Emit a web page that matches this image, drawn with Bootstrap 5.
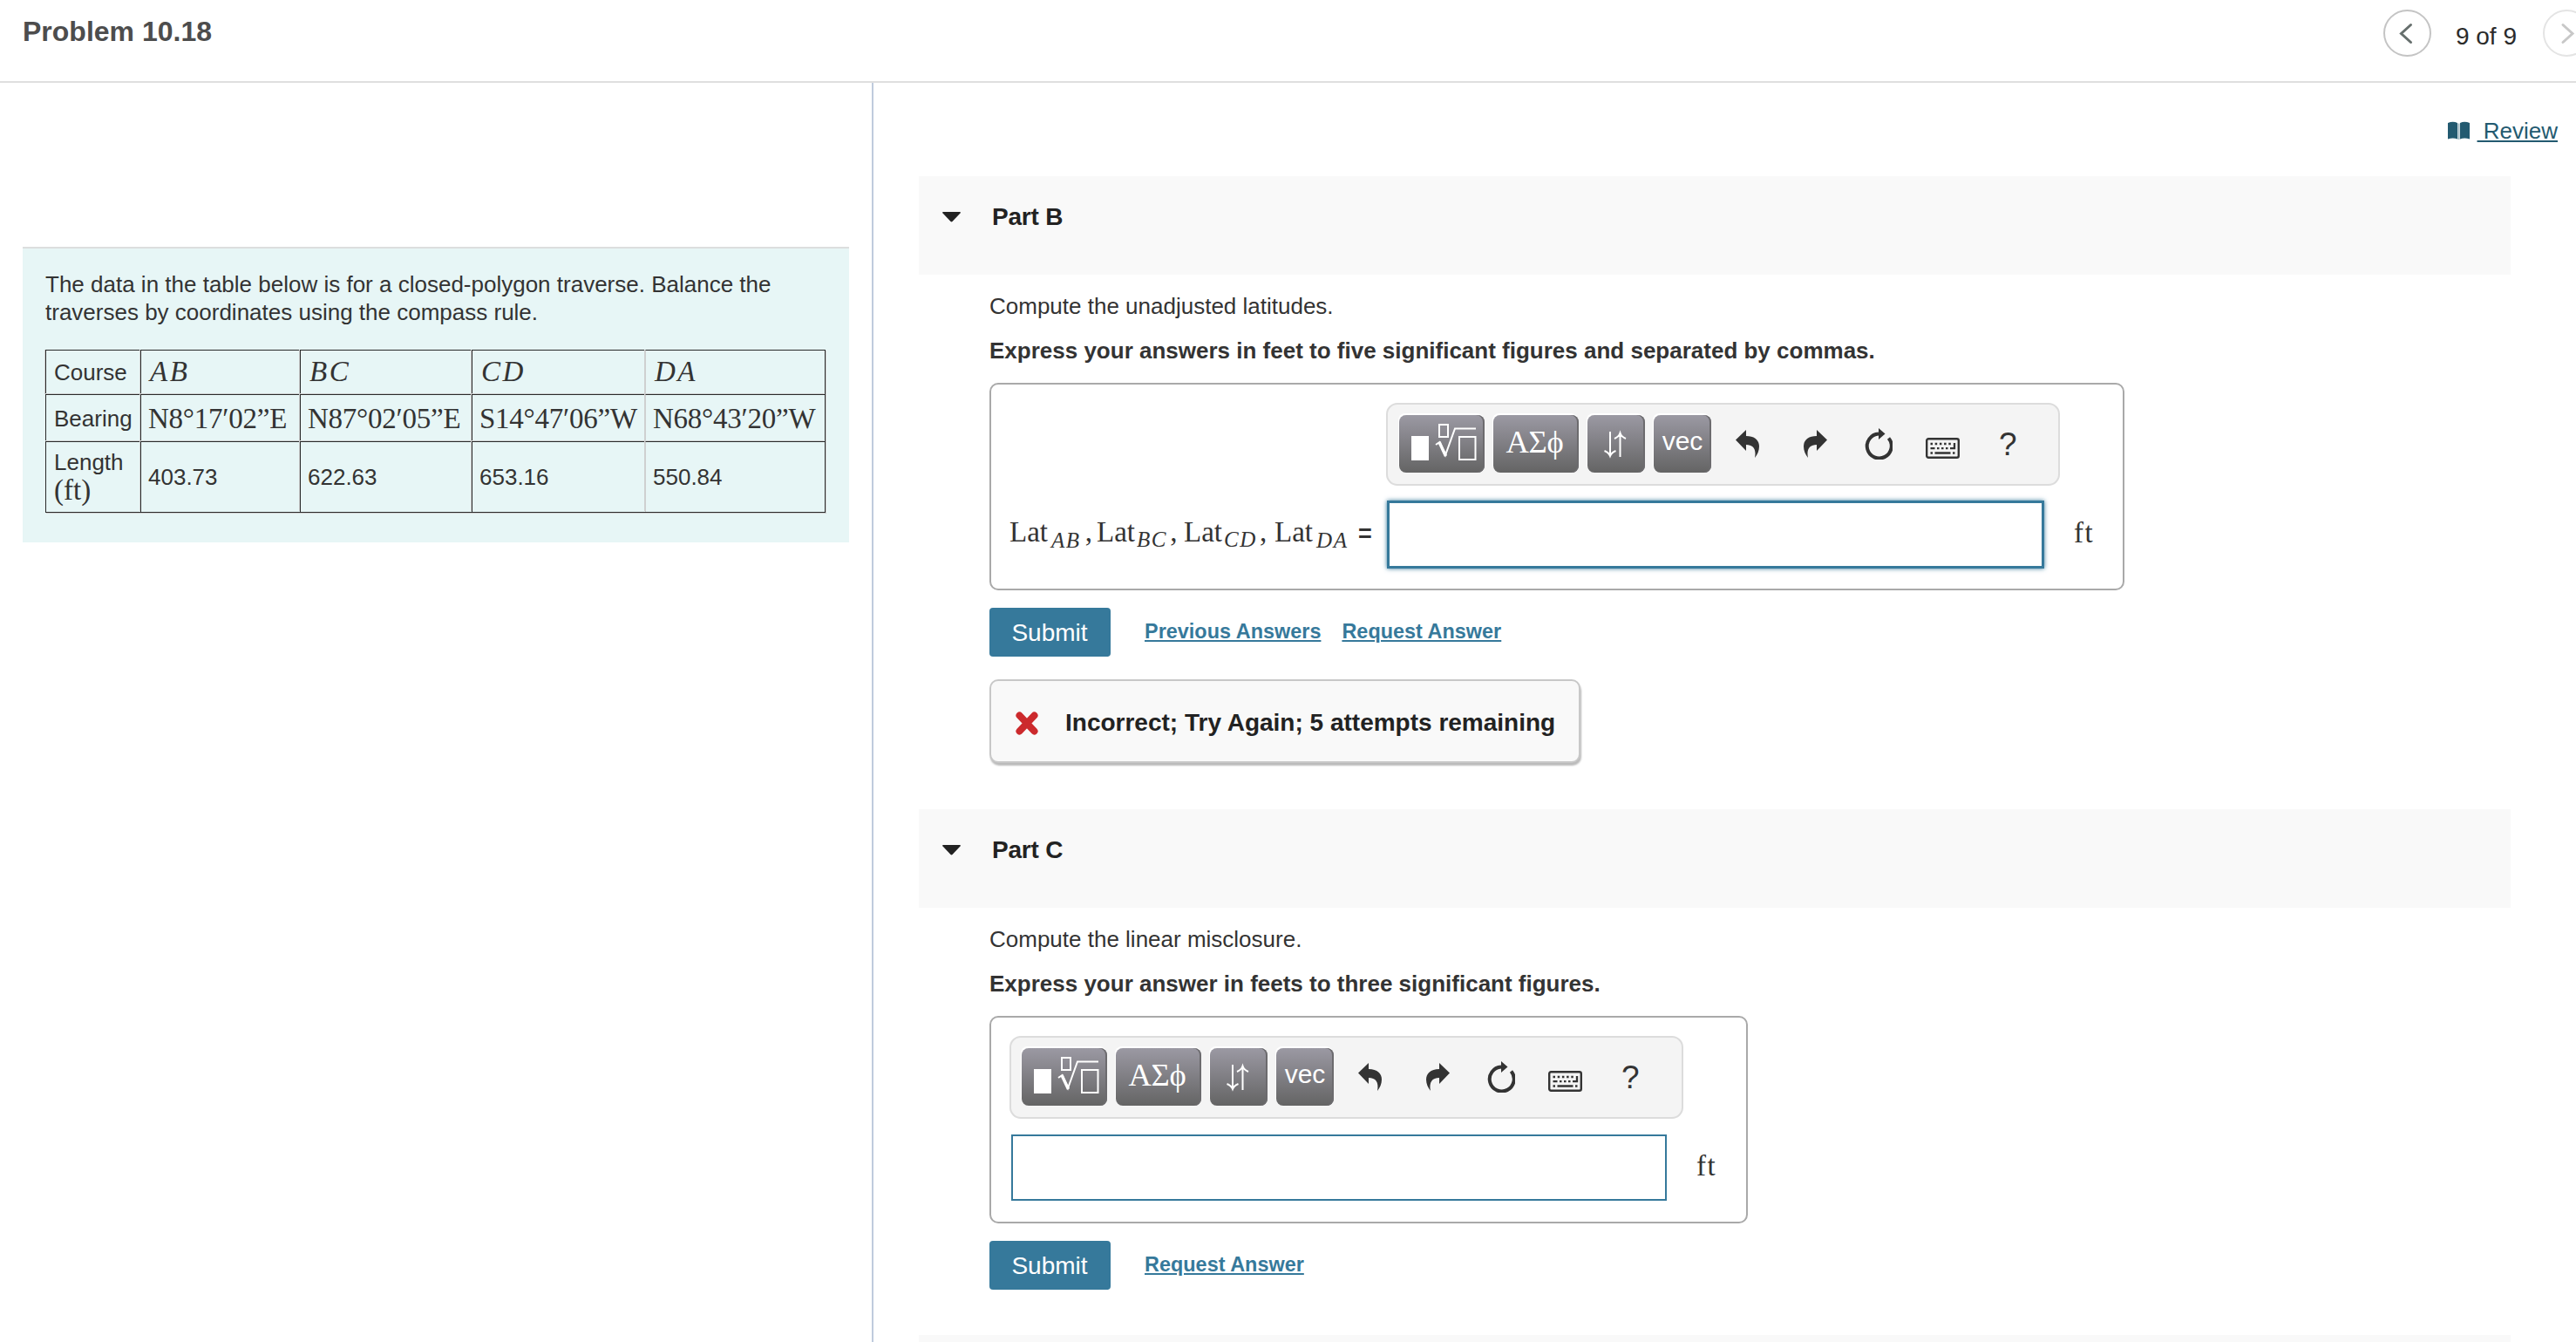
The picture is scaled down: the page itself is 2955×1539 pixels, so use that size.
<!DOCTYPE html>
<html lang="en">
<head>
<meta charset="utf-8">
<title>Problem 10.18</title>
<link rel="stylesheet" href="https://cdn.jsdelivr.net/npm/bootstrap@5.3.0/dist/css/bootstrap.min.css">
<style>
body{font-family:"Liberation Sans",Arial,sans-serif;font-size:26px;line-height:30px;color:#333;background:#fff}
.topbar{height:95px;border-bottom:2px solid #dfdfdf;padding-left:26px;overflow:hidden}
.topbar h1{font-size:32px;line-height:72px;color:#4d4d4d}
.pager{height:54px;margin-top:11px;margin-right:-17px;font-size:28px;color:#2b2b2b}
.pager .count{padding:8px 30px 0 28px;white-space:nowrap}
.panes{height:1444px}
.pane-left{flex:0 0 1002px;border-right:2px solid #bfcbdd;padding:188px 26px 0}
.intro{background:#e7f6f6;border-top:2px solid #dcdede;height:339px;padding:25px 26px 0;color:#333;line-height:32px}
.intro p{white-space:nowrap;margin-bottom:27px}
.traverse{width:895px;table-layout:fixed;border-collapse:separate;border-spacing:0;border-right:1px solid #2a2a2a;border-bottom:1px solid #2a2a2a;box-shadow:1px 1px #cfd0d0}
.traverse td{border-top:1px solid #2a2a2a;border-left:1px solid #2a2a2a;box-shadow:-1px -1px #cfd0d0;padding:0 0 0 8px;white-space:nowrap;vertical-align:middle}
.traverse td:first-child{padding-left:9px;box-shadow:0 -1px #cfd0d0}
.traverse tr:first-child td{box-shadow:-1px 0 #cfd0d0}
.traverse td:last-child{border-left-color:#cfd0d0}
.serif{font-family:"Liberation Serif","Times New Roman",serif;font-size:33px;line-height:32px}
.angle{letter-spacing:-.25px}
.vars{font-style:italic;letter-spacing:2.5px;padding-left:2px}
.traverse tr:first-child .vars{display:block;padding-bottom:3px}
.pane-right{padding-left:52px}
.review{height:107px;padding:38px 21px 0 0;line-height:34px;color:#235a70}
.review svg{margin:6px 9px 0 0}
.review a{color:#235a70;text-underline-offset:2px;text-decoration-thickness:2px}
.part{width:1826px}
.part-b{height:726px}.part-c{height:603px}
.part-head{height:113px;background:#f9f9f9;padding:32px 0 0 27px;font-size:28px;font-weight:700;color:#222}
.part-next{height:8px;background:#f9f9f9}
.part-head h2{font-size:28px;line-height:30px;margin:0 0 0 36px;font-weight:700;letter-spacing:-.2px}
.part-body{padding:21px 0 0 81px}
.part-body p{margin-bottom:21px}
.answer{border:2px solid #a9a9a9;border-radius:10px;height:238px;margin-top:22px;padding-top:21px}
.part-body p+.answer{margin-top:22px}
.part-body p.fw-bold{margin-bottom:22px}
.answer-b{width:1302px}.answer-c{width:870px;padding-left:21px}
.answer-b .tools{margin-left:453px}
.tools{width:773px;height:95px;border:2px solid #dcdcdc;border-radius:13px;background:#f4f4f4;padding:12px 0 0 13px}
.answer-c .tools{padding-left:12px}
.key{width:98px;height:66px;border-radius:8px;border:0;padding:0;background:linear-gradient(#9b99a3,#646464);box-shadow:-1px -2px 0 #fff,inset -2px 0 #6c6b6e;color:#fff;margin-right:10px;display:flex;justify-content:center}
.key-sm{width:66px}
.greek{font-family:"Liberation Serif","DejaVu Serif",serif;font-size:36.5px;line-height:62px;letter-spacing:-.3px;padding-right:3px}
.vec{font-size:30px;line-height:60px}
.ico-undo{width:27px;height:32px;margin:17px 0 0 18px}
.ico-redo{width:27px;height:32px;margin:17px 0 0 51px;transform:scaleX(-1)}
.ico-reset{width:32px;height:36px;margin:15px 0 0 43px}
.ico-keys{width:39px;height:24px;margin:26px 0 0 38px}
.help{font-size:37px;line-height:67px;margin-left:45px}
.entry{margin-top:17px}
.answer-c .entry{margin-top:18px}
.field{border:2px solid #36799b;background:#fff}
.field-b{width:754px;height:78px;border-width:3px;box-shadow:0 0 5px #36799b}
.field-c{width:752px;height:76px;margin-left:2px}
.lhs{width:454px;padding:0 0 4px 21px;white-space:nowrap}
.lhs .term{width:100px;display:inline-block}
.lhs .term-cd{width:104px}
.lhs .term i{font-size:25px;letter-spacing:1.6px;position:relative;top:6px;margin:0 3px 0 2px}
.lhs .term i.gap-a{top:7px;margin:0 5px 0 4px}
.lhs .eq{font:bold 27px "Liberation Sans",sans-serif;margin-left:-4px}
.unit{padding-bottom:4px;margin-left:34px;letter-spacing:1.5px}
.actions{margin-top:20px}
.submit{width:139px;height:56px;border-radius:4px;background:#36799b;color:#fff;border:0;font-size:28px;line-height:56px;padding:1px 1px 0 0}
.act{font-size:23.4px;font-weight:700;color:#36799b;text-decoration-thickness:2px;text-underline-offset:2px;padding-bottom:3px;margin-left:39px;letter-spacing:.03px}
.act+.act{margin-left:24px}
.feedback{width:678px;height:96px;border:2px solid #c8c8c8;border-radius:10px;background:#f9f9f9;box-shadow:1px 3px 2px #bbb;margin-top:26px;padding:4px 0 0 27px;font-size:28px;font-weight:700;color:#222;white-space:nowrap}
.feedback svg{margin-right:30px}
</style>
<script src="https://cdn.jsdelivr.net/npm/bootstrap@5.3.0/dist/js/bootstrap.bundle.min.js"></script>
</head>
<body class="overflow-hidden">
<svg width="0" height="0" class="d-block">
 <defs>
  <symbol id="i-root" viewBox="0 0 98 66"><path d="M14 24h20v28H14z" fill="#fff"/><path d="M46 11h10v14H46zM69 25h18.500v26H69z" fill="none" stroke="#fff" stroke-width="2"/><path d="M42 34l4.500-3L53 46 64 15.500H88" fill="none" stroke="#fff" stroke-width="2"/><path d="M46 31l7.500 16" stroke="#fff" stroke-width="3.500"/></symbol>
  <symbol id="i-swap" viewBox="0 0 66 66"><path d="M26 19v28M19.500 41q5 2 6.500 6 1.500-4 6.500-6M37.500 48V20M31 27q5-2 6.500-6.500Q39 25 44 27" fill="none" stroke="#fff" stroke-width="2"/></symbol>
  <symbol id="i-undo" viewBox="0 0 27 32"><path d="M0 11.500L12 0V7C22 7 27 12 27 19c0 5-2 9-5 13C24 22 20 17 12 17V24z" fill="#333"/></symbol>
  <symbol id="i-reset" viewBox="0 0 32 36"><path d="M16 6.500A14 14 0 1 0 27.500 11.500" fill="none" stroke="#333" stroke-width="4"/><path d="M16 0l7.500 6.500L16 13z" fill="#333"/></symbol>
  <symbol id="i-keys" viewBox="0 0 39 24"><rect x="1.200" y="1.200" width="36.600" height="21.600" rx="2" fill="none" stroke="#333" stroke-width="2.400"/><path d="M5.500 7H30M5.500 17.500h2.500M31 17.500h3" fill="none" stroke="#333" stroke-width="2.500" stroke-dasharray="2.500 2.700"/><path d="M5.500 12.200h5M13 12.200h2.500M18 12.200h2.500M23 12.200h2.500M28 12.200h5V6M10.500 17.500h18" fill="none" stroke="#333" stroke-width="2.300"/></symbol>
 </defs>
</svg>

<header class="topbar d-flex justify-content-between align-items-start">
 <h1 class="fw-bold m-0">Problem 10.18</h1>
 <div class="pager d-flex align-items-center">
  <svg width="55" height="54" viewBox="0 0 55 54"><ellipse cx="27.500" cy="27" rx="26.500" ry="26" fill="#fff" stroke="#c4c4c4" stroke-width="2"/><path d="M31.500 17.500L20.500 27.500l11 10" fill="none" stroke="#666f6d" stroke-width="3" stroke-linecap="round"/></svg>
  <span class="count">9 of 9</span>
  <svg width="55" height="54" viewBox="0 0 55 54"><ellipse cx="27.500" cy="27" rx="26.500" ry="26" fill="#fff" stroke="#e4e4e4" stroke-width="2"/><path d="M23 17.500l11 10-11 10" fill="none" stroke="#c8c8c8" stroke-width="3" stroke-linecap="round"/></svg>
 </div>
</header>

<main class="panes d-flex">
 <aside class="pane-left">
  <div class="intro">
   <p>The data in the table below is for a closed-polygon traverse. Balance the<br>traverses by coordinates using the compass rule.</p>
   <table class="traverse">
    <colgroup><col style="width:109px"><col style="width:183px"><col style="width:197px"><col style="width:199px"><col style="width:206px"></colgroup>
    <tr style="height:51px"><td>Course</td><td><span class="serif vars">AB</span></td><td><span class="serif vars">BC</span></td><td><span class="serif vars">CD</span></td><td><span class="serif vars">DA</span></td></tr>
    <tr style="height:54px"><td>Bearing</td><td class="serif angle">N8°17′02”E</td><td class="serif angle">N87°02′05”E</td><td class="serif angle">S14°47′06”W</td><td class="serif angle">N68°43′20”W</td></tr>
    <tr style="height:81px"><td>Length<br><span class="serif">(ft)</span></td><td>403.73</td><td>622.63</td><td>653.16</td><td>550.84</td></tr>
   </table>
  </div>
 </aside>

 <section class="pane-right flex-grow-1">
  <div class="review d-flex justify-content-end align-items-start">
   <svg width="25" height="22" viewBox="0 0 25 22"><path d="M0 2Q6-.500 11 2V20.500Q6 18.500 0 20.500zM14 2Q19-.500 25 2V20.500Q19 18.500 14 20.500z" fill="#235a70"/><path d="M11.500 2.500h2V21h-2z" fill="#9db7c1"/></svg>
   <a href="#">&nbsp;Review</a>
  </div>

  <article class="part part-b">
   <div class="part-head d-flex align-items-start">
    <svg width="21" height="30" viewBox="0 0 21 30"><path d="M1 9h19q1.500 0 .5 1.500L11.500 20q-1 .8-2 0L.5 10.500Q-.5 9 1 9z" fill="#222"/></svg>
    <h2>Part B</h2>
   </div>
   <div class="part-body">
    <p>Compute the unadjusted latitudes.</p>
    <p class="fw-bold">Express your answers in feet to five significant figures and separated by commas.</p>
    <div class="answer answer-b">
     <div class="tools d-flex">
      <button class="key"><svg width="98" height="66"><use href="#i-root"/></svg></button>
      <button class="key"><span class="greek">ΑΣϕ</span></button>
      <button class="key key-sm"><svg width="66" height="66"><use href="#i-swap"/></svg></button>
      <button class="key key-sm"><span class="vec">vec</span></button>
      <svg class="ico-undo"><use href="#i-undo"/></svg>
      <svg class="ico-redo"><use href="#i-undo"/></svg>
      <svg class="ico-reset"><use href="#i-reset"/></svg>
      <svg class="ico-keys"><use href="#i-keys"/></svg>
      <span class="help">?</span>
     </div>
     <div class="entry d-flex align-items-center">
      <div class="lhs serif"><span class="term">Lat<i class="gap-a">AB</i>,</span><span class="term">Lat<i>BC</i>,</span><span class="term term-cd">Lat<i>CD</i>,</span><span class="term">Lat<i class="gap-a">DA</i></span><span class="eq">=</span></div>
      <div class="field field-b"></div>
      <div class="unit serif">ft</div>
     </div>
    </div>
    <div class="actions d-flex align-items-center">
     <button class="submit">Submit</button>
     <a href="#" class="act">Previous Answers</a>
     <a href="#" class="act">Request Answer</a>
    </div>
    <div class="feedback d-flex align-items-center">
     <svg width="28" height="27" viewBox="0 0 28 27"><path d="M5.500 4.500l17 18M22.500 4.500l-17 18" stroke="#cc2a2d" stroke-width="8" stroke-linecap="round"/></svg>
     <span>Incorrect; Try Again; 5 attempts remaining</span>
    </div>
   </div>
  </article>

  <article class="part part-c">
   <div class="part-head d-flex align-items-start">
    <svg width="21" height="30" viewBox="0 0 21 30"><path d="M1 9h19q1.500 0 .5 1.500L11.500 20q-1 .8-2 0L.5 10.500Q-.5 9 1 9z" fill="#222"/></svg>
    <h2>Part C</h2>
   </div>
   <div class="part-body">
    <p>Compute the linear misclosure.</p>
    <p class="fw-bold">Express your answer in feets to three significant figures.</p>
    <div class="answer answer-c">
     <div class="tools d-flex">
      <button class="key"><svg width="98" height="66"><use href="#i-root"/></svg></button>
      <button class="key"><span class="greek">ΑΣϕ</span></button>
      <button class="key key-sm"><svg width="66" height="66"><use href="#i-swap"/></svg></button>
      <button class="key key-sm"><span class="vec">vec</span></button>
      <svg class="ico-undo"><use href="#i-undo"/></svg>
      <svg class="ico-redo"><use href="#i-undo"/></svg>
      <svg class="ico-reset"><use href="#i-reset"/></svg>
      <svg class="ico-keys"><use href="#i-keys"/></svg>
      <span class="help">?</span>
     </div>
     <div class="entry d-flex align-items-center">
      <div class="field field-c"></div>
      <div class="unit serif">ft</div>
     </div>
    </div>
    <div class="actions d-flex align-items-center">
     <button class="submit">Submit</button>
     <a href="#" class="act">Request Answer</a>
    </div>
   </div>
  </article>
  <div class="part part-next"></div>
 </section>
</main>
</body>
</html>
